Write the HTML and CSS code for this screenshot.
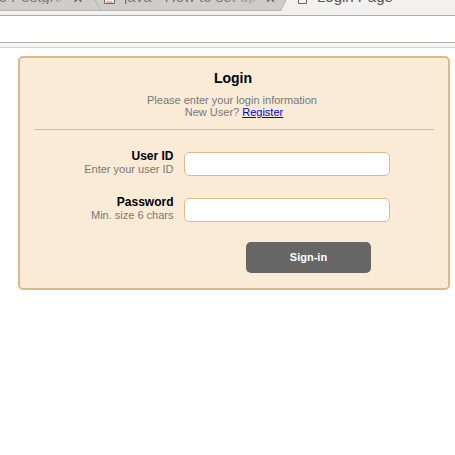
FILE: index.html
```html
<!DOCTYPE html>
<html lang="en">
  <head>
    <meta charset="UTF-8" />
    <meta name="viewport" content="width=device-width, initial-scale=1.0" />
    <title>Login Page</title>
    <link rel="stylesheet" href="styles.css">
  </head>
  <body>
    <div class="tabbar">
      <div class="tab tab-first">
        <span class="tab-title tab-fade">o Postgre</span>
        <span class="tab-close">×</span>
      </div>
      <svg class="tab-edge" viewBox="0 0 8 11">
        <path class="edge-fill" d="M0 0 H8 V10 H0 Z" />
        <path class="edge-line" d="M2 0 L7 10" />
        <path class="edge-line" d="M0 10.5 H8" />
      </svg>
      <div class="tab tab-second">
        <svg class="tab-icon" viewBox="0 0 11 4">
          <path class="icon-page" d="M0.5 0 V3.5 H10.5 V0" />
          <path class="icon-mark" d="M2.5 2 H8.5" />
        </svg>
        <span class="tab-title tab-fade">java - How to set up</span>
        <span class="tab-close">×</span>
      </div>
      <svg class="tab-edge" viewBox="0 0 8 11">
        <path class="edge-fill" d="M0 0 H5 L0 10 Z" />
        <path class="edge-line" d="M5 0 L0 10 V11" />
      </svg>
      <div class="tab tab-active">
        <svg class="tab-icon" viewBox="0 0 11 4">
          <path class="icon-blank" d="M1.5 0 V3.5 H9.5 V0" />
        </svg>
        <span class="tab-title">Login Page</span>
      </div>
    </div>
    <div class="toolbar"></div>
    <div class="bar-gap"></div>

    <div class="panel">
      <h1>Login</h1>
      <p class="intro">
        <span class="intro-first">Please enter your login information</span>
        New User? <a href="#">Register</a>
      </p>
      <hr />
      <form class="login-form">
        <div class="form-row">
          <label for="userId">
            <b>User ID</b>
            <span>Enter your user ID</span>
          </label>
          <input type="text" id="userId" name="userId" />
        </div>
        <div class="form-row">
          <label for="password">
            <b>Password</b>
            <span>Min. size 6 chars</span>
          </label>
          <input type="password" id="password" name="password" />
        </div>
        <button type="submit">Sign-in</button>
      </form>
    </div>
  </body>
</html>
```

FILE: styles.css
```css
body {
    margin: 0;
    font-family: "Liberation Sans", Arial, sans-serif;
    background-color: #fff;
}
.tabbar {
    display: flex;
    align-items: flex-start;
    height: 15px;
    background-color: #f2f1ef;
    border-bottom: 1px solid #aeacaa;
    font-size: 15px;
    color: #555;
}
.tab {
    display: flex;
    align-items: flex-start;
    box-sizing: border-box;
    height: 11px;
    white-space: nowrap;
    overflow: hidden;
}
.tab-title {
    margin-top: -11px;
    line-height: 15px;
}
.tab-fade {
    color: #777;
    -webkit-mask-image: linear-gradient(to right, #000 80%, rgba(0, 0, 0, 0.25));
    mask-image: linear-gradient(to right, #000 80%, rgba(0, 0, 0, 0.25));
}
.tab-first,
.tab-second {
    background-color: #cfcdca;
    border-bottom: 1px solid #b5b3b0;
}
.tab-first {
    width: 93px;
    justify-content: flex-end;
    gap: 10px;
    padding-right: 10px;
}
.tab-second {
    width: 180px;
    gap: 9px;
    padding-left: 3px;
}
.tab-close {
    margin-top: -9px;
    font-size: 17px;
    line-height: 15px;
    color: #555;
}
.tab-edge {
    flex: none;
    width: 8px;
    height: 11px;
}
.edge-fill {
    fill: #cfcdca;
}
.edge-line {
    fill: none;
    stroke: #b5b3b0;
    stroke-width: 1;
}
.tab-active {
    flex: 1;
    gap: 9px;
    padding-left: 8px;
}
.tab-icon {
    flex: none;
    width: 11px;
    height: 4px;
}
.icon-page,
.icon-blank {
    fill: #f4f3f1;
    stroke: #666;
    stroke-width: 1;
}
.icon-mark {
    stroke: #e07b39;
    stroke-width: 1;
}
.toolbar {
    height: 26px;
    background-color: #fff;
    border-bottom: 1px solid #b0aeac;
}
.bar-gap {
    height: 4px;
    background-color: #f6f5f4;
    border-bottom: 1px solid #d6d5d3;
}
.panel {
    box-sizing: border-box;
    width: 432px;
    height: 234px;
    margin: 8px 0 0 18px;
    padding: 12px 14px 0;
    background-color: #faebd7;
    border: 2px solid #deb887;
    border-radius: 5px;
}
h1 {
    margin: 0;
    padding-right: 2px;
    font-size: 14px;
    line-height: 16px;
    text-align: center;
    color: #000;
}
.intro {
    margin: 8px 0 0;
    font-size: 11px;
    line-height: 12px;
    text-align: center;
    color: #777;
}
.intro-first {
    display: block;
    padding-right: 4px;
}
.intro a {
    color: #00e;
}
hr {
    height: 1px;
    margin: 11px 0 0;
    border: none;
    background-color: #deb887;
}
.login-form {
    display: flex;
    flex-direction: column;
    gap: 19px;
    margin-top: 19px;
}
.form-row {
    display: flex;
    align-items: flex-end;
    gap: 10.5px;
}
label {
    display: flex;
    flex-direction: column;
    width: 139.5px;
    text-align: right;
    font-size: 12px;
    line-height: 14px;
    color: #000;
}
label span {
    font-size: 11px;
    line-height: 13px;
    color: #777;
}
input {
    box-sizing: border-box;
    width: 206px;
    height: 24px;
    padding: 2px 6px;
    background-color: #fff;
    border: 1px solid #deb887;
    border-radius: 5px;
}
button {
    align-self: flex-start;
    width: 125px;
    height: 31px;
    margin: 1px 0 0 212px;
    padding: 0 0 2px;
    background-color: #666;
    color: #fff;
    border: none;
    border-radius: 5px;
    font-family: inherit;
    font-size: 11px;
    font-weight: bold;
    cursor: pointer;
}
```
